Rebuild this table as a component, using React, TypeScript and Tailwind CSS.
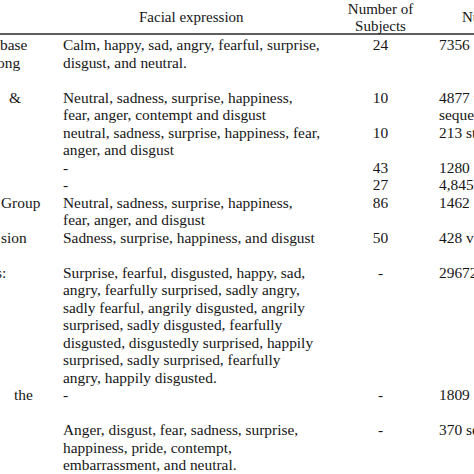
const rows = [
  {
    name: [{ t: 'base', c: '' }, { t: 'ong', c: '-ml-[3px]' }, { t: '\u00a0', c: '' }],
    expr: ['Calm, happy, sad, angry, fearful, surprise,', 'disgust, and neutral.'],
    subjects: '24',
    count: ['7356 files'],
  },
  {
    name: [{ t: '&', c: 'ml-[9px]' }, { t: '\u00a0', c: '' }],
    expr: ['Neutral, sadness, surprise, happiness,', 'fear, anger, contempt and disgust'],
    subjects: '10',
    count: ['4877 video', 'sequences'],
  },
  {
    name: [],
    expr: ['neutral, sadness, surprise, happiness, fear,', 'anger, and disgust'],
    subjects: '10',
    count: ['213 still'],
  },
  { name: [], expr: ['-'], subjects: '43', count: ['1280'] },
  { name: [], expr: ['-'], subjects: '27', count: ['4,845'] },
  {
    name: [{ t: 'Group', c: 'ml-[1px]' }],
    expr: ['Neutral, sadness, surprise, happiness,', 'fear, anger, and disgust'],
    subjects: '86',
    count: ['1462'],
  },
  {
    name: [{ t: 'sion', c: 'ml-[1px]' }, { t: '\u00a0', c: '' }],
    expr: ['Sadness, surprise, happiness, and disgust'],
    subjects: '50',
    count: ['428 videos'],
  },
  {
    name: [{ t: 's:', c: '-ml-[4px]' }],
    expr: [
      'Surprise, fearful, disgusted, happy, sad,',
      'angry, fearfully surprised, sadly angry,',
      'sadly fearful, angrily disgusted, angrily',
      'surprised, sadly disgusted, fearfully',
      'disgusted, disgustedly surprised, happily',
      'surprised, sadly surprised, fearfully',
      'angry, happily disgusted.',
    ],
    subjects: '-',
    count: ['29672 images'],
  },
  {
    name: [{ t: 'the', c: 'ml-[14px]' }, { t: '\u00a0', c: '' }],
    expr: ['-'],
    subjects: '-',
    count: ['1809'],
  },
  {
    name: [],
    expr: [
      'Anger, disgust, fear, sadness, surprise,',
      'happiness, pride, contempt,',
      'embarrassment, and neutral.',
    ],
    subjects: '-',
    count: ['370 sequences'],
  },
];

export default function App() {
  return (
    <div
      className="w-[474px] h-[474px] overflow-hidden bg-white text-[#161616]"
      style={{ fontFamily: '"Liberation Serif", "Times New Roman", serif' }}
    >
      {/* Header */}
      <div className="grid grid-cols-[63px_283px_69px_1fr] h-[33px] text-[15px] leading-[16.5px] whitespace-nowrap">
        <div />
        <div className="flex items-center pl-[76px]">Facial expression</div>
        <div className="flex flex-col items-center pt-[1px]">
          <span>Number of</span>
          <span>Subjects</span>
        </div>
        <div className="flex items-center pl-[47px]">Number of samples</div>
      </div>
      <div className="h-[2px] bg-[#5e5e5e]" />

      {/* Body */}
      <div className="pt-[1px] text-[15.4px] leading-[17.5px] whitespace-nowrap">
        {rows.map((r, i) => (
          <div key={i} className="grid grid-cols-[63px_283px_69px_1fr]">
            <div className="overflow-hidden">
              {r.name.map((n, j) => (
                <div key={j} className={n.c}>
                  {n.t}
                </div>
              ))}
            </div>
            <div>
              {r.expr.map((line, j) => (
                <div key={j}>{line}</div>
              ))}
            </div>
            <div className="text-center">{r.subjects}</div>
            <div className="pl-[24px]">
              {r.count.map((line, j) => (
                <div key={j}>{line}</div>
              ))}
            </div>
          </div>
        ))}
      </div>
    </div>
  );
}
